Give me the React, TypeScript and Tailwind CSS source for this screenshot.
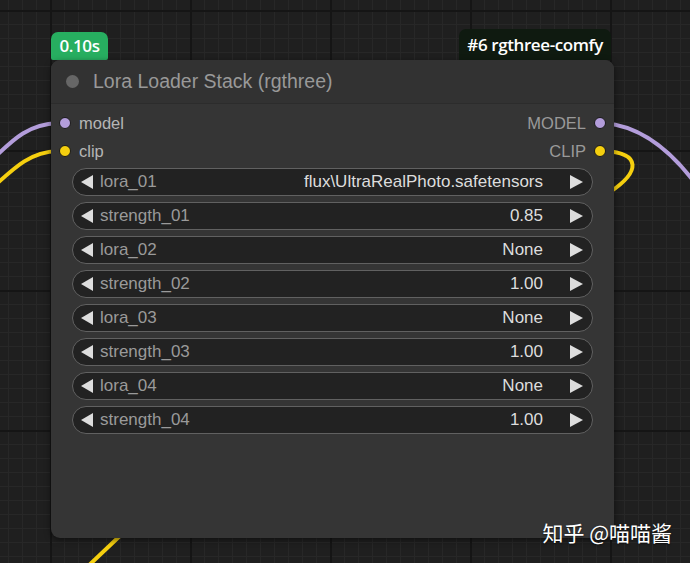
import React from 'react'

type Widget = { label: string; value: string }

const widgets: Widget[] = [
  { label: 'lora_01', value: 'flux\\UltraRealPhoto.safetensors' },
  { label: 'strength_01', value: '0.85' },
  { label: 'lora_02', value: 'None' },
  { label: 'strength_02', value: '1.00' },
  { label: 'lora_03', value: 'None' },
  { label: 'strength_03', value: '1.00' },
  { label: 'lora_04', value: 'None' },
  { label: 'strength_04', value: '1.00' },
]

const sans = "font-['Liberation_Sans',Arial,sans-serif]"

function Canvas() {
  // grid + wires, drawn behind the node
  return (
    <svg className="absolute inset-0" width={690} height={563} aria-hidden>
      <defs>
        <pattern id="minor" x={50} y={10} width={14} height={14} patternUnits="userSpaceOnUse">
          <path d="M0 0.5H14M0.5 0V14" stroke="#272727" strokeWidth={1} fill="none" />
        </pattern>
        <pattern id="major" x={50} y={10} width={140} height={140} patternUnits="userSpaceOnUse">
          <path d="M0 1H140M1 0V140" stroke="#151515" strokeWidth={2} fill="none" />
        </pattern>
      </defs>
      <rect width={690} height={563} fill="#1f1f1f" />
      <rect width={690} height={563} fill="url(#minor)" />
      <rect width={690} height={563} fill="url(#major)" />
      <g fill="none" strokeWidth={4} strokeLinecap="round">
        <path d="M-10 162 C15 137 30 124 58 123" stroke="#b39ddb" />
        <path d="M-10 190 C15 167 30 152 58 151" stroke="#f5cf0f" />
        <path d="M604 123 C640 126 672 150 700 190" stroke="#b39ddb" />
        <path d="M604 151 C642 153 640 172 610 192" stroke="#f5cf0f" />
        <path d="M124 532 L84 570" stroke="#f5cf0f" />
      </g>
    </svg>
  )
}

function Dot({ color }: { color: string }) {
  return (
    <span
      className="inline-block h-[12px] w-[12px] shrink-0 rounded-full border border-[#1a1a1a]"
      style={{ backgroundColor: color }}
    />
  )
}

function WidgetRow({ label, value }: Widget) {
  return (
    <div className="flex h-[28px] items-center rounded-full border border-[#616161] bg-[#222222] pl-[8px] pr-[9px]">
      <svg width={12} height={14} viewBox="0 0 12 14" className="shrink-0">
        <path d="M12 0 L0 7 L12 14 Z" fill="#dddddd" />
      </svg>
      <span className="ml-[7px] text-[17px] text-[#9a9a9a]">{label}</span>
      <span className="ml-auto text-[17px] text-[#dddddd]">{value}</span>
      <svg width={13} height={14} viewBox="0 0 13 14" className="ml-[27px] shrink-0">
        <path d="M0 0 L13 7 L0 14 Z" fill="#dddddd" />
      </svg>
    </div>
  )
}

export default function App() {
  return (
    <div className={`relative h-[563px] w-[690px] overflow-hidden bg-[#1f1f1f] ${sans}`}>
      <Canvas />

      <div className="absolute left-[51px] top-[29px] flex w-[563px] flex-col">
        <div className="flex h-[31px] items-end justify-between pr-[3px] font-['Open_Sans','Noto_Sans',sans-serif] font-semibold text-white">
          <div className="flex h-[28px] w-[57px] items-center justify-center rounded-t-[7px] rounded-b-[2px] bg-[#27ae60] text-[17px] tracking-[-0.4px]">
            0.10s
          </div>
          <div className="flex h-[31px] items-center rounded-t-[7px] bg-[#0f1a10] px-[8px] text-[17px] tracking-[-0.4px]">
            #6 rgthree-comfy
          </div>
        </div>

        <div className="flex h-[478px] flex-col rounded-[9px] bg-[#353535] shadow-[0_2px_6px_rgba(0,0,0,0.5)]">
          <div className="flex h-[44px] items-center rounded-t-[9px] border-b border-[#2c2c2c] bg-[#323232] pl-[15px]">
            <span className="h-[13px] w-[13px] rounded-full bg-[#666666]" />
            <span className="ml-[14px] text-[19.5px] text-[#999999]">Lora Loader Stack (rgthree)</span>
          </div>

          <div className="flex flex-col pt-[5px]">
            <div className="flex h-[28px] items-center justify-between px-[8px] text-[16.5px] text-[#b5b5b5]">
              <div className="flex items-center gap-[8px]">
                <Dot color="#b39ddb" />
                <span>model</span>
              </div>
              <div className="flex items-center gap-[8px]">
                <span className="text-[#9a9a9a]">MODEL</span>
                <Dot color="#b39ddb" />
              </div>
            </div>
            <div className="flex h-[28px] items-center justify-between px-[8px] text-[16.5px] text-[#b5b5b5]">
              <div className="flex items-center gap-[8px]">
                <Dot color="#f5cf0f" />
                <span>clip</span>
              </div>
              <div className="flex items-center gap-[8px]">
                <span className="text-[#9a9a9a]">CLIP</span>
                <Dot color="#f5cf0f" />
              </div>
            </div>
          </div>

          <div className="mt-[3px] flex flex-col gap-[6px] px-[21px]">
            {widgets.map((w) => (
              <WidgetRow key={w.label} {...w} />
            ))}
          </div>
        </div>
      </div>

      <div className="absolute bottom-[15px] right-[18px] font-['Noto_Sans_CJK_SC','Noto_Sans',sans-serif] text-[21px] text-white [text-shadow:0_1px_2px_rgba(0,0,0,0.6)]">
        知乎 @喵喵酱
      </div>
    </div>
  )
}
